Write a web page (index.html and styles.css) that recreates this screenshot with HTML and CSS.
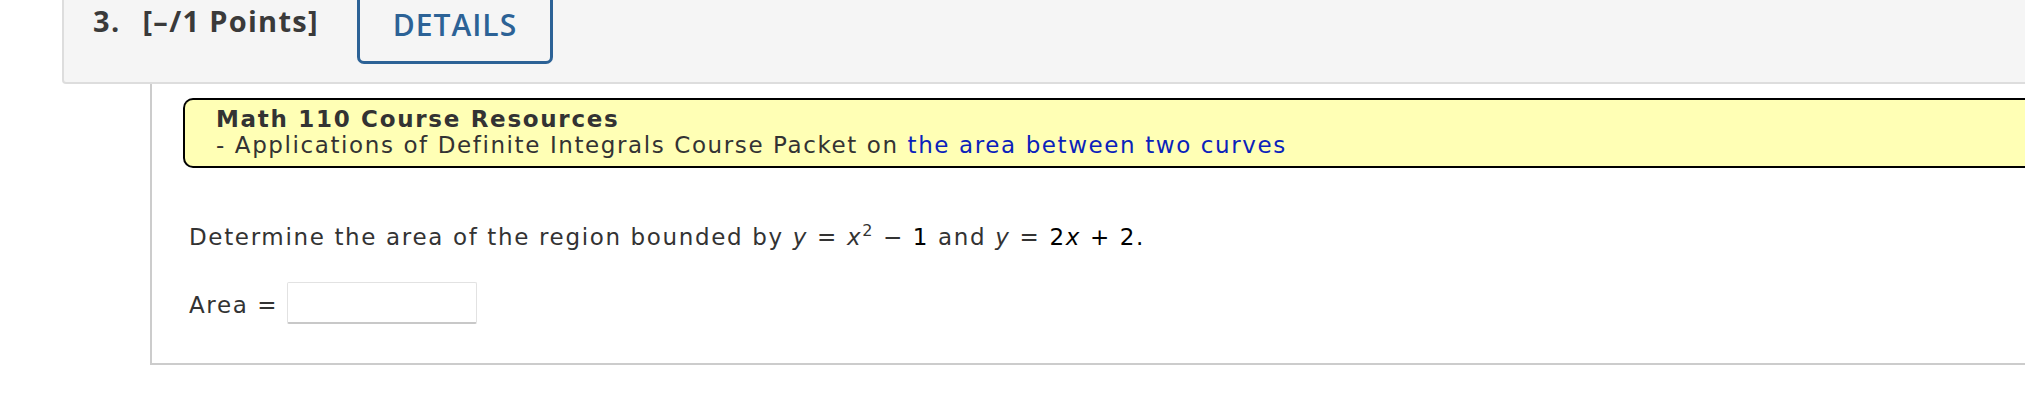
FILE: index.html
```html
<!DOCTYPE html>
<html lang="en">
<head>
  <meta charset="UTF-8">
  <title>Question 3</title>
  <link rel="stylesheet" href="styles.css">
</head>
<body>

  <div class="question">
    <div class="q-header">
      <span class="q-number">3.</span>
      <span class="q-points">[&ndash;/1 Points]</span>
      <button type="button" class="details-btn">DETAILS</button>
    </div>

    <div class="q-body">
      <div class="resources">
        <div class="resources-title">Math 110 Course Resources</div>
        <div class="resources-line">- Applications of Definite Integrals Course Packet on <a href="#" class="resources-link">the area between two curves</a></div>
      </div>

      <p class="q-text">Determine the area of the region bounded by <i>y</i> = <i>x</i><sup>2</sup> &minus; <span class="num">1</span> and <i>y</i> = <span class="num">2<i>x</i> + 2.</span></p>

      <div class="answer-row">
        <label for="area" class="answer-label">Area =</label>
        <input type="text" id="area" class="answer-input">
      </div>
    </div>
  </div>

</body>
</html>
```

FILE: styles.css
```css
body {
  margin: 0;
  overflow: hidden;
  background: #fff;
  font-family: "DejaVu Sans", Verdana, sans-serif;
  color: #333;
}
.question {
  margin-left: 62px;
  width: 2200px;
}
.q-header {
  display: flex;
  align-items: flex-start;
  height: 82px;
  background: #f5f5f5;
  border: 2px solid #ddd;
  border-top: 0;
  border-bottom-left-radius: 4px;
  font-family: "Open Sans", sans-serif;
  color: #3a3a3a;
}
.q-number,
.q-points {
  font-size: 29px;
  font-weight: 700;
  line-height: 40px;
  padding-top: 1px;
  letter-spacing: 1.3px;
}
.q-number {
  margin-left: 29px;
}
.q-points {
  margin-left: 22px;
}
.details-btn {
  margin-left: 38px;
  height: 64px;
  width: 196px;
  padding: 0 0 13px;
  background: transparent;
  border: 3px solid #2c6296;
  border-top: 0;
  border-radius: 0 0 7px 7px;
  font-family: "Open Sans", sans-serif;
  font-size: 30px;
  font-weight: 600;
  letter-spacing: 1px;
  color: #2c6296;
}
.q-body {
  margin-left: 88px;
  height: 265px;
  border-left: 2px solid #ccc;
  border-bottom: 2px solid #ccc;
  padding-top: 14px;
}
.resources {
  margin-left: 31px;
  height: 66px;
  padding-left: 31px;
  background: #ffffb5;
  border: 2px solid #000;
  border-right: 0;
  border-radius: 10px 0 0 10px;
  font-size: 23px;
  line-height: 26px;
  letter-spacing: 1.6px;
}
.resources-title {
  font-weight: 700;
  padding-top: 6px;
  letter-spacing: 1.7px;
}
.resources-link {
  color: #0a22bb;
  text-decoration: none;
}
.q-text {
  margin: 0;
  padding: 56px 0 0 37px;
  font-size: 23px;
  line-height: 26px;
  letter-spacing: 1.65px;
}
.q-text sup {
  font-size: 16px;
  line-height: 0;
}
.num {
  color: #000;
}
.answer-row {
  display: flex;
  align-items: flex-start;
  margin: 32px 0 0 37px;
}
.answer-label {
  font-size: 23px;
  line-height: 26px;
  letter-spacing: 1.6px;
  padding-top: 10px;
  margin-right: 9px;
}
.answer-input {
  width: 188px;
  height: 39px;
  margin: 0;
  padding: 0;
  border: 1px solid #e2e2e2;
  border-bottom: 2px solid #c8c8c8;
  border-radius: 2px;
}
```
